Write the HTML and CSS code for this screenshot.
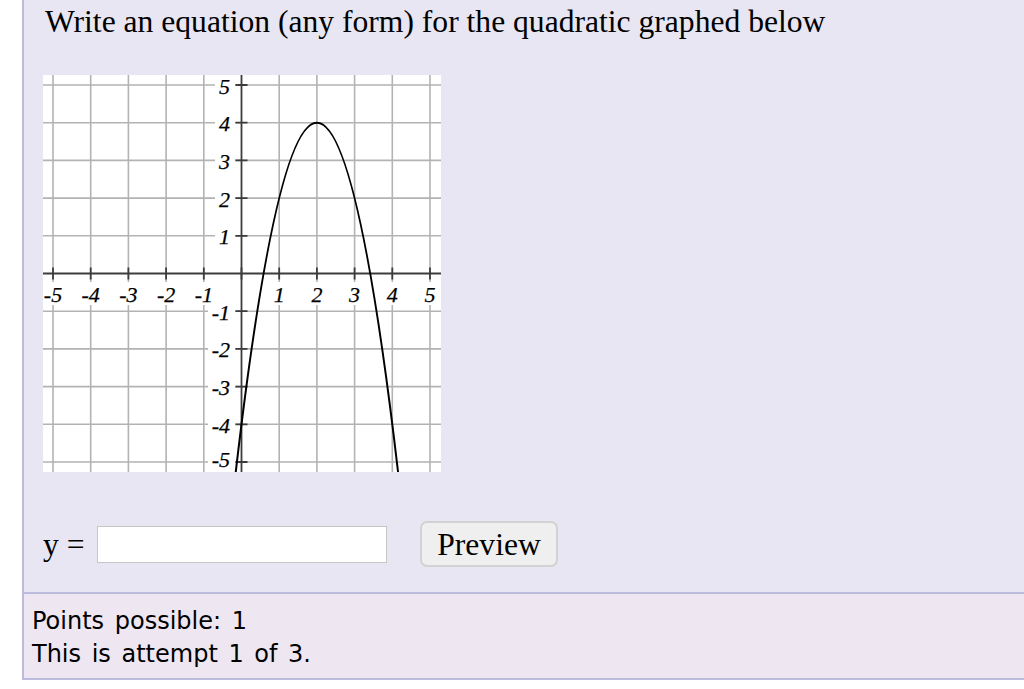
FILE: index.html
```html
<!DOCTYPE html>
<html lang="en">
<head>
<meta charset="utf-8">
<title>Quadratic question</title>
<link rel="stylesheet" href="styles.css">
</head>
<body>
<div class="question-wrap">
  <div class="question">
    <p class="prompt">Write an equation (any form) for the quadratic graphed below</p>
    <svg class="graph" width="398" height="397" viewBox="0 0 398 397" xmlns="http://www.w3.org/2000/svg">
      <rect class="bg" x="0" y="0" width="398" height="397"/>
      <path class="grid" d="M10 0V397M47.7 0V397M85.4 0V397M123.1 0V397M160.8 0V397M236.2 0V397M273.9 0V397M311.6 0V397M349.3 0V397M387 0V397M0 10H398M0 47.7H398M0 85.4H398M0 123.1H398M0 160.8H398M0 236.2H398M0 273.9H398M0 311.6H398M0 349.3H398M0 387H398"/>
      <path class="axis" d="M198.5 0V397M0 198.5H398"/>
      <path class="axis" d="M10 192.5V204.5M47.7 192.5V204.5M85.4 192.5V204.5M123.1 192.5V204.5M160.8 192.5V204.5M198.5 192.5V204.5M236.2 192.5V204.5M273.9 192.5V204.5M311.6 192.5V204.5M349.3 192.5V204.5M387 192.5V204.5M192.5 10H204.5M192.5 47.7H204.5M192.5 85.4H204.5M192.5 123.1H204.5M192.5 160.8H204.5M192.5 236.2H204.5M192.5 273.9H204.5M192.5 311.6H204.5M192.5 349.3H204.5M192.5 387H204.5"/>
      <g class="label-bg">
        <rect x="-1" y="207" width="22" height="23"/>
        <rect x="36.7" y="207" width="22" height="23"/>
        <rect x="74.4" y="207" width="22" height="23"/>
        <rect x="112.1" y="207" width="22" height="23"/>
        <rect x="149.8" y="207" width="22" height="23"/>
        <rect x="228.2" y="207" width="16" height="23"/>
        <rect x="265.9" y="207" width="16" height="23"/>
        <rect x="303.6" y="207" width="16" height="23"/>
        <rect x="341.3" y="207" width="16" height="23"/>
        <rect x="379" y="207" width="16" height="23"/>
        <rect x="172" y="1" width="20" height="18"/>
        <rect x="172" y="38.7" width="20" height="18"/>
        <rect x="172" y="76.4" width="20" height="18"/>
        <rect x="172" y="114.1" width="20" height="18"/>
        <rect x="172" y="151.8" width="20" height="18"/>
        <rect x="165" y="227.2" width="27" height="18"/>
        <rect x="165" y="264.9" width="27" height="18"/>
        <rect x="165" y="302.6" width="27" height="18"/>
        <rect x="165" y="340.3" width="27" height="18"/>
        <rect x="165" y="378" width="27" height="18"/>
      </g>
      <g class="xlab">
        <text x="10" y="227">-5</text>
        <text x="47.7" y="227">-4</text>
        <text x="85.4" y="227">-3</text>
        <text x="123.1" y="227">-2</text>
        <text x="160.8" y="227">-1</text>
        <text x="236.2" y="227">1</text>
        <text x="273.9" y="227">2</text>
        <text x="311.6" y="227">3</text>
        <text x="349.3" y="227">4</text>
        <text x="387" y="227">5</text>
      </g>
      <g class="ylab">
        <text x="187" y="18.5">5</text>
        <text x="187" y="56.2">4</text>
        <text x="187" y="93.9">3</text>
        <text x="187" y="131.6">2</text>
        <text x="187" y="169.3">1</text>
        <text x="187" y="244.7">-1</text>
        <text x="187" y="282.4">-2</text>
        <text x="187" y="320.1">-3</text>
        <text x="187" y="357.8">-4</text>
        <text x="187" y="392">-5</text>
      </g>
      <path class="curve" d="M190.96 412.6Q273.9 -317.2 356.84 412.6"/>
    </svg>
    <div class="answer-row">
      <span class="lhs">y =</span>
      <input class="answer" type="text" aria-label="y">
      <button class="preview" type="button">Preview</button>
    </div>
  </div>
  <div class="info">
    <div>Points possible: 1</div>
    <div>This is attempt 1 of 3.</div>
  </div>
</div>
</body>
</html>
```
FILE: styles.css
```css
html, body {
  margin: 0;
  padding: 0;
  background: #ffffff;
}

.question-wrap {
  margin-left: 22px;
  border-left: 2px solid #bdbbdd;
  border-bottom: 2px solid #bdbbdd;
  background: #e8e6f2;
}

.question {
  padding: 4px 0 25px 19px;
  font-family: "Liberation Serif", "Times New Roman", serif;
  font-size: 31.6px;
  color: #000;
}

.prompt {
  margin: 0;
  padding-left: 2px;
  line-height: 36px;
}

.graph {
  display: block;
  margin-top: 35px;
}

.graph .bg { fill: #ffffff; }
.graph .grid { stroke: #b3b3b3; stroke-width: 1.6; fill: none; }
.graph .axis { stroke: #3c3c3c; stroke-width: 1.8; fill: none; }
.graph .label-bg rect { fill: #ffffff; }
.graph text {
  font-family: "Liberation Serif", "Times New Roman", serif;
  font-style: italic;
  font-size: 22px;
  fill: #000;
  stroke: #000;
  stroke-width: 0.25;
}
.graph .xlab text { text-anchor: middle; }
.graph .ylab text { text-anchor: end; }
.graph .curve { stroke: #000; stroke-width: 2; fill: none; }

.answer-row {
  display: flex;
  align-items: center;
  margin-top: 49px;
}

.lhs {
  line-height: 35px;
}

.answer {
  box-sizing: border-box;
  width: 290px;
  height: 37px;
  margin: 0 0 0 12.5px;
  border: 1px solid #c6c6c6;
  background: #ffffff;
  padding: 0 4px;
  font: inherit;
}

.preview {
  box-sizing: border-box;
  width: 138px;
  height: 46px;
  margin-left: 33px;
  padding: 0;
  border: 2px solid #d2d2d2;
  border-radius: 7px;
  background: #efefef;
  color: #000;
  font-family: "Liberation Serif", "Times New Roman", serif;
  font-size: 31.6px;
  line-height: 35px;
  text-align: center;
}

.info {
  border-top: 2px solid #bdbbdd;
  background: #eee6f0;
  padding: 11px 8px 6px 8px;
  font-family: "DejaVu Sans", "Liberation Sans", sans-serif;
  font-size: 24px;
  line-height: 33.3px;
  word-spacing: 3px;
  color: #000;
}
```
